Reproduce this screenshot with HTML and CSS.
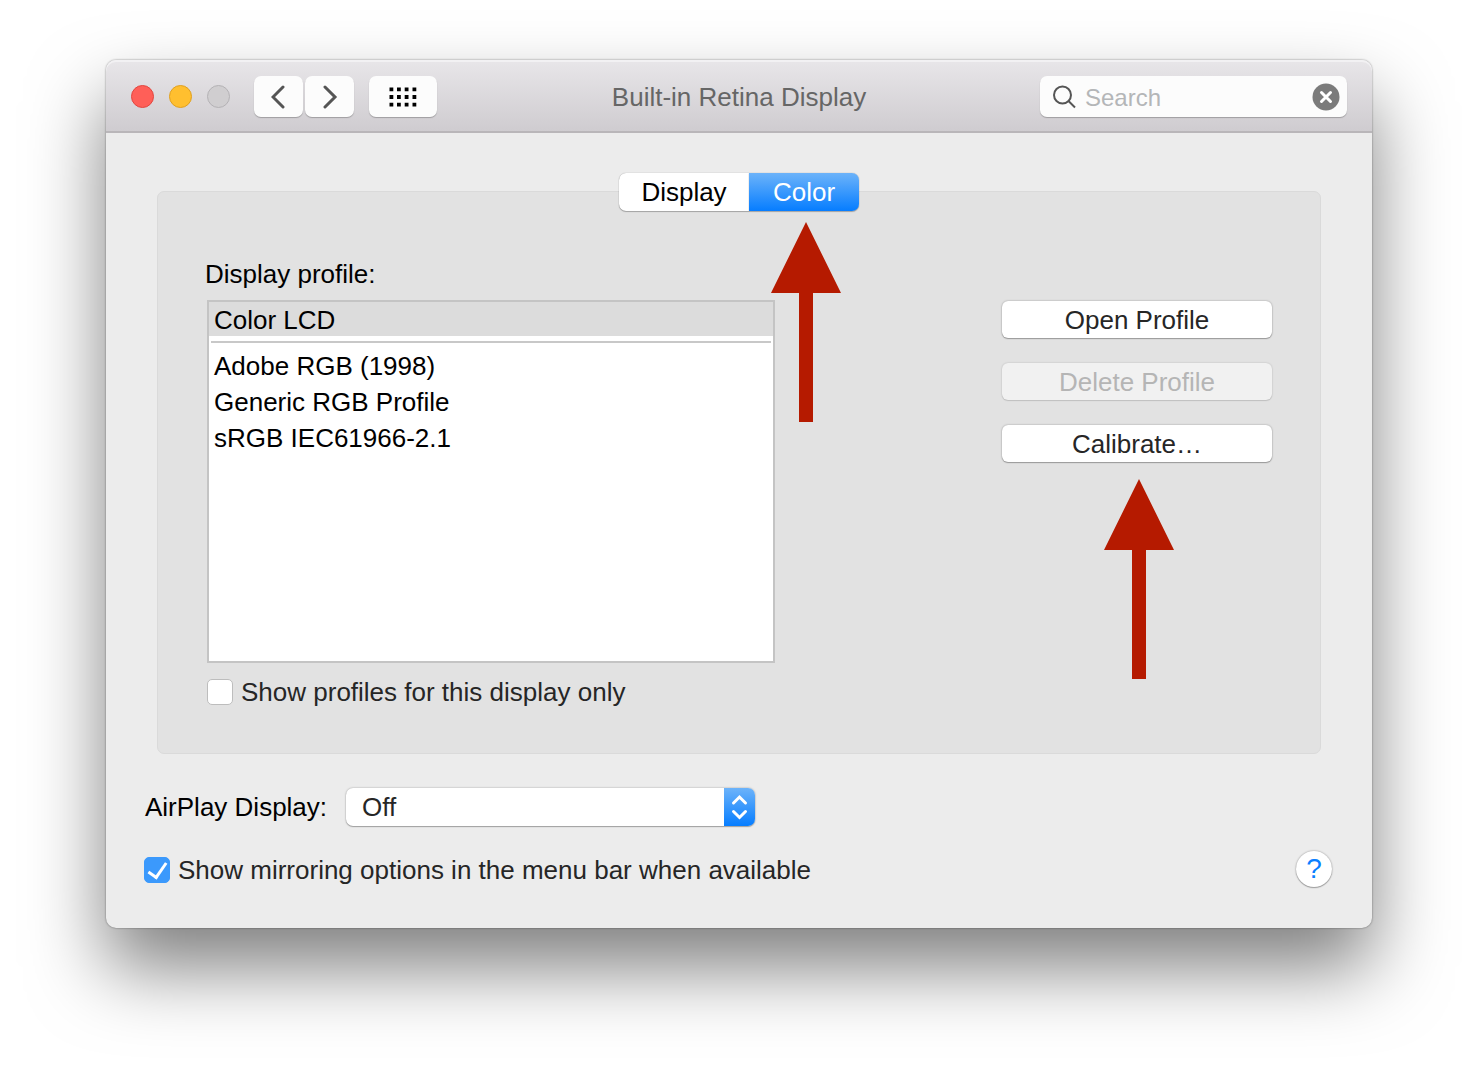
FILE: index.html
```html
<!DOCTYPE html>
<html lang="en">
<head>
  <meta charset="UTF-8">
  <title>Built-in Retina Display</title>
  <link rel="stylesheet" href="styles.css">
</head>
<body>
  <main class="window">
    <header class="titlebar">
      <div class="toolbar">
        <div class="lights">
          <button class="light close" aria-label="Close"></button>
          <button class="light minimize" aria-label="Minimize"></button>
          <button class="light zoom" aria-label="Zoom" disabled></button>
        </div>
        <div class="nav">
          <button class="tool" aria-label="Back">
            <svg width="16" height="24" viewBox="0 0 16 24"><path d="M12 2 2 12l10 10"/></svg>
          </button>
          <button class="tool" aria-label="Forward">
            <svg width="16" height="24" viewBox="0 0 16 24"><path d="M3 2l10 10L3 22"/></svg>
          </button>
        </div>
        <button class="tool show-all" aria-label="Show All">
          <svg width="28" height="20" viewBox="0 0 28 20">
            <path class="dots" d="M0.500 0.500h3.800v3.800H.5zM8 .5h3.800v3.800H8zM15.700 .5h3.800v3.800h-3.800zM23.500 .5h3.800v3.800h-3.800zM.5 8.100h3.800v3.800H.5zM8 8.100h3.800v3.800H8zM15.700 8.100h3.800v3.800h-3.800zM23.500 8.100h3.800v3.800h-3.800zM.5 15.700h3.800v3.800H.5zM8 15.700h3.800v3.800H8zM15.700 15.700h3.800v3.800h-3.800zM23.500 15.700h3.800v3.800h-3.800z"/>
          </svg>
        </button>
      </div>
      <h1>Built-in Retina Display</h1>
      <div class="search">
        <svg width="24" height="24" viewBox="0 0 24 24"><circle cx="9.500" cy="10" r="8.500"/><path d="M15.500 16l6.500 6.500"/></svg>
        <input type="text" placeholder="Search" aria-label="Search">
        <button class="clear" aria-label="Clear search">
          <svg width="28" height="28" viewBox="0 0 28 28"><circle cx="14" cy="14" r="13.500"/><path d="M9.500 9.500l9 9M18.500 9.500l-9 9"/></svg>
        </button>
      </div>
    </header>

    <div class="content">
      <section class="panel">
        <div class="tabs" role="tablist">
          <button class="tab" role="tab" aria-selected="false">Display</button>
          <div class="pointed">
            <button class="tab active" role="tab" aria-selected="true">Color</button>
            <svg class="arrow" width="72" height="200" viewBox="0 0 72 200"><path d="M36 0l35 71H43v129H29V71H1z"/></svg>
          </div>
        </div>

        <div class="columns">
          <div class="profiles">
            <h2 id="profileLabel">Display profile:</h2>
            <ul class="list" role="listbox" aria-labelledby="profileLabel">
              <li class="selected" role="option" aria-selected="true">Color LCD</li>
              <li class="separator" role="separator"></li>
              <li role="option">Adobe RGB (1998)</li>
              <li role="option">Generic RGB Profile</li>
              <li role="option">sRGB IEC61966-2.1</li>
            </ul>
            <label class="check"><input type="checkbox"> Show profiles for this display only</label>
          </div>

          <div class="actions">
            <button class="push">Open Profile</button>
            <button class="push" disabled>Delete Profile</button>
            <div class="pointed">
              <button class="push">Calibrate…</button>
              <svg class="arrow" width="72" height="200" viewBox="0 0 72 200"><path d="M36 0l35 71H43v129H29V71H1z"/></svg>
            </div>
          </div>
        </div>
      </section>

      <footer class="footer">
        <div class="options">
          <div class="airplay">
            <label for="airplay">AirPlay Display:</label>
            <div class="popup">
              <select id="airplay">
                <option>Off</option>
              </select>
              <svg width="31" height="38" viewBox="0 0 31 38"><path d="M9.500 15l6-6 6 6M9.500 23.500l6 6 6-6"/></svg>
            </div>
          </div>
          <label class="check"><input type="checkbox" checked> Show mirroring options in the menu bar when available</label>
        </div>
        <button class="help" aria-label="Help">?</button>
      </footer>
    </div>
  </main>
</body>
</html>
```
FILE: styles.css
```css
* {
  box-sizing: border-box;
}

body {
  margin: 0;
  padding: 60px 106px 151px;
  background: #fff;
  color: #000;
  font-family: "Liberation Sans", Helvetica, Arial, sans-serif;
  font-size: 26px;
  line-height: 36px;
}

button, input, select {
  font: inherit;
  color: inherit;
}

button {
  padding: 0;
  border: none;
}

svg {
  display: block;
  fill: none;
}

h1, h2 {
  margin: 0;
  font-size: 26px;
  font-weight: normal;
}

.window {
  border-radius: 10px;
  background: #ececec;
  box-shadow: 0 0 2px rgba(0, 0, 0, 0.5), 0 40px 76px rgba(0, 0, 0, 0.5);
}

/* title bar */

.titlebar {
  display: grid;
  grid-template-columns: 1fr auto 1fr;
  align-items: center;
  height: 73px;
  padding: 2px 25px 0;
  border-bottom: 2px solid #b9b6b9;
  border-radius: 10px 10px 0 0;
  background: linear-gradient(#e8e6e9, #cfccd0);
  box-shadow: inset 0 2px #f2f1f3;
}

.titlebar h1 {
  color: #666;
}

.toolbar, .lights, .nav {
  display: flex;
  align-items: center;
}

.toolbar {
  gap: 15px;
}

.lights {
  gap: 15px;
  margin-right: 9px;
}

.light {
  width: 23px;
  height: 23px;
  border: 1px solid #e2463f;
  border-radius: 50%;
  background: #ff5f58;
}

.minimize {
  border-color: #e0a020;
  background: #ffbf2f;
}

.zoom {
  border-color: #b4b2b5;
  background: #d0ced0;
}

.nav {
  gap: 2px;
}

.tool, .search {
  height: 41px;
  border-radius: 7px;
  background: #fcfcfc;
  box-shadow: 0 1px 1px rgba(0, 0, 0, 0.25);
}

.tool {
  display: grid;
  place-items: center;
  width: 49px;
}

.show-all {
  width: 68px;
}

.tool path {
  stroke: #555;
  stroke-width: 3;
  stroke-linecap: round;
}

.tool .dots {
  fill: #000;
  stroke: none;
}

.search {
  display: flex;
  align-items: center;
  justify-self: end;
  gap: 8px;
  width: 307px;
  padding: 0 7px 0 13px;
}

.search svg {
  flex: none;
  stroke: #555;
  stroke-width: 2;
}

.search input {
  flex: 1;
  min-width: 0;
  height: 36px;
  padding: 2px 0 0;
  border: none;
  outline: none;
  background: none;
  font-size: 24px;
}

.search input::placeholder {
  color: #b4b6b8;
}

.clear {
  background: none;
}

.clear circle {
  fill: #7b7b7b;
  stroke: none;
}

.clear path {
  stroke: #fff;
  stroke-width: 3;
  stroke-linecap: round;
}

/* tabbed panel */

.content {
  padding: 58px 38px 40px;
}

.panel {
  margin: 0 13px;
  padding-bottom: 43px;
  border: 1px solid #dadada;
  border-radius: 7px;
  background: #e2e2e2;
}

.tabs {
  display: flex;
  justify-content: center;
  margin-top: -19px;
}

.tab {
  width: 130px;
  height: 38px;
  border-radius: 7px 0 0 7px;
  background: #fff;
  box-shadow: 0 0 1px rgba(0, 0, 0, 0.4), 0 1px 1px rgba(0, 0, 0, 0.25);
}

.tab.active {
  width: 110px;
  border-radius: 0 7px 7px 0;
  background: linear-gradient(#6cb3fa, #067dff);
  color: #fff;
}

.pointed {
  position: relative;
}

.arrow {
  position: absolute;
  top: calc(100% + 11px);
  left: calc(50% - 34px);
  fill: #b51a00;
}

.pointed .push + .arrow {
  top: calc(100% + 17px);
}

.columns {
  display: flex;
  justify-content: space-between;
  padding: 45px 48px 0 49px;
}

.profiles {
  flex: 0 1 568px;
}

.profiles h2 {
  margin-left: -2px;
}

.list {
  height: 363px;
  margin: 8px 0 11px;
  padding: 0;
  border: 2px solid #c4c4c4;
  background: #fff;
  list-style: none;
}

.list li {
  padding: 0 5px;
}

.list .selected {
  height: 34px;
  background: #dcdcdc;
}

.list .separator {
  height: 2px;
  margin: 5px 2px;
  background: #c8c8c8;
}

.check {
  display: flex;
  align-items: center;
  gap: 8px;
  color: #262626;
}

.check input {
  appearance: none;
  display: grid;
  place-items: center;
  width: 26px;
  height: 26px;
  margin: 0;
  border: 1px solid #bdbdbd;
  border-radius: 5px;
  background: #fff;
}

.check input:checked {
  border-color: #3b99fc;
  background: #3b99fc;
}

.check input:checked::after {
  content: "";
  width: 8px;
  height: 16px;
  margin-bottom: 3px;
  border: solid #fff;
  border-width: 0 3px 3px 0;
  transform: rotate(35deg);
}

.actions {
  display: flex;
  flex-direction: column;
  gap: 25px;
  width: 270px;
  padding-top: 45px;
}

.push {
  display: block;
  width: 100%;
  height: 37px;
  border-radius: 6px;
  background: #fff;
  box-shadow: 0 0 2px rgba(0, 0, 0, 0.35), 0 1px 1px rgba(0, 0, 0, 0.25);
  color: #262626;
  line-height: 36px;
}

.push:disabled {
  background: #f1f1f1;
  box-shadow: 0 0 2px rgba(0, 0, 0, 0.2), 0 1px 1px rgba(0, 0, 0, 0.1);
  color: #b5b5b5;
}

/* bottom options */

.footer {
  display: flex;
  align-items: flex-end;
  justify-content: space-between;
  padding: 34px 2px 0 0;
}

.airplay {
  display: flex;
  align-items: center;
  gap: 19px;
  margin: 0 0 26px 1px;
}

.popup {
  position: relative;
  width: 409px;
}

.popup select {
  appearance: none;
  display: block;
  width: 100%;
  height: 38px;
  padding: 0 40px 0 16px;
  border: none;
  border-radius: 7px;
  background: #fff;
  box-shadow: 0 0 2px rgba(0, 0, 0, 0.35), 0 1px 1px rgba(0, 0, 0, 0.25);
  color: #262626;
}

.popup svg {
  position: absolute;
  top: 0;
  right: 0;
  border-radius: 0 7px 7px 0;
  background: linear-gradient(#6cb3fa, #067dff);
  stroke: #fff;
  stroke-width: 3;
  stroke-linecap: round;
  pointer-events: none;
}

.help {
  width: 36px;
  height: 36px;
  margin-bottom: 1px;
  border-radius: 50%;
  background: #fff;
  box-shadow: 0 0 2px rgba(0, 0, 0, 0.4), 0 1px 1px rgba(0, 0, 0, 0.25);
  color: #0a7fff;
  font-size: 28px;
}
```
